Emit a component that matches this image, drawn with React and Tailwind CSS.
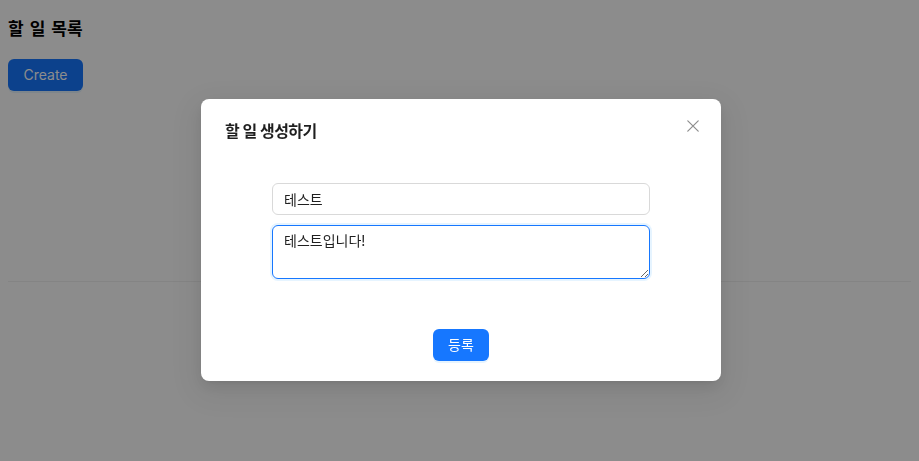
import React from "react";

const font = { fontFamily: 'Inter, "Noto Sans CJK KR", "Noto Sans", sans-serif' };

export default function App() {
  return (
    <div className="relative h-[461px] w-full overflow-hidden bg-white" style={font}>
      <div className="px-2">
        <h1 className="pt-[17px] text-[17px] font-bold leading-6 text-black [word-spacing:2px]">할 일 목록</h1>
        <button className="mt-[18px] h-8 w-[75px] rounded-md bg-[#1677ff] text-sm text-white shadow-[0_2px_0_rgba(5,145,255,0.1)]">
          Create
        </button>
        <div className="mt-[190px] border-t border-[#f0f0f0]" />
      </div>

      <div className="fixed inset-0 bg-black/45" />

      <div className="absolute left-[201px] top-[99px] w-[520px] rounded-lg bg-white px-6 pb-5 pt-5 shadow-[0_6px_16px_0_rgba(0,0,0,0.08),0_3px_6px_-4px_rgba(0,0,0,0.12),0_9px_28px_8px_rgba(0,0,0,0.05)]">
        <button className="absolute right-[17px] top-[16px] flex h-[22px] w-[22px] items-center justify-center text-black/45">
          <svg width="12" height="12" viewBox="0 0 12 12" fill="none">
            <path d="M0.8 0.8 L11.2 11.2 M11.2 0.8 L0.8 11.2" stroke="currentColor" strokeWidth="1.2" strokeLinecap="round" />
          </svg>
        </button>
        <div className="text-base font-semibold leading-6 tracking-[-0.6px] text-black/[0.88]">할 일 생성하기</div>

        <div className="mt-10 flex flex-col items-center gap-[10px]">
          <input
            className="h-8 w-[378px] rounded-md border border-[#d9d9d9] px-[11px] text-sm text-black/[0.88] outline-none"
            defaultValue="테스트"
          />
          <textarea
            className="h-[54px] w-[378px] rounded-md border border-[#1677ff] px-[11px] py-1 text-sm leading-[22px] text-black/[0.88] shadow-[0_0_0_2px_rgba(5,145,255,0.1)] outline-none"
            defaultValue="테스트입니다!"
          />
        </div>

        <div className="mt-[50px] flex justify-center">
          <button className="h-8 w-14 rounded-md bg-[#1677ff] text-sm text-white shadow-[0_2px_0_rgba(5,145,255,0.1)]">
            등록
          </button>
        </div>
      </div>
    </div>
  );
}
